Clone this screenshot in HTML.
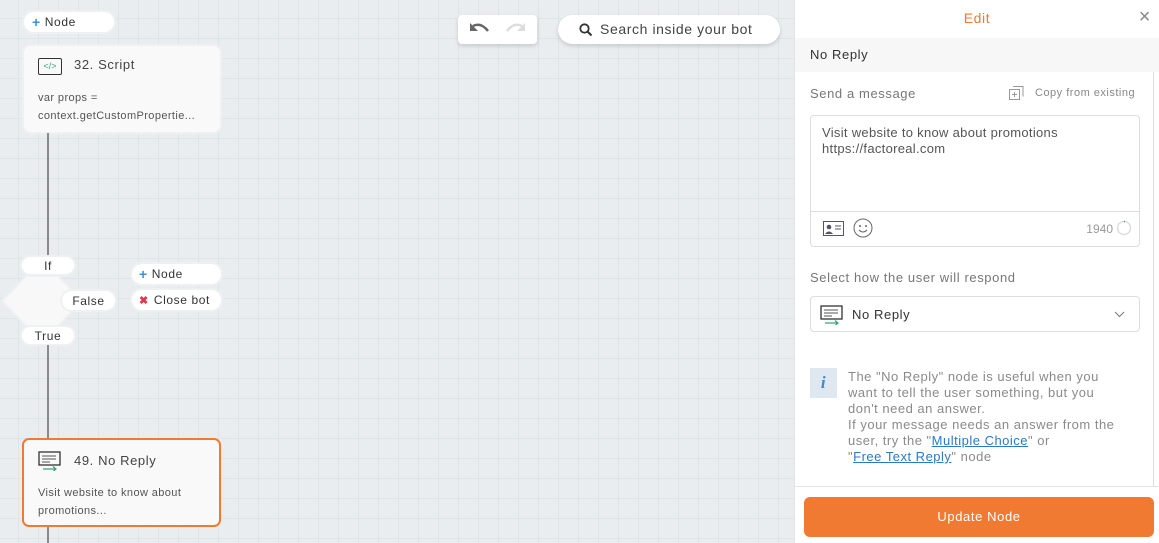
<!DOCTYPE html>
<html><head><style>
*{box-sizing:border-box;margin:0;padding:0}
body{width:1159px;height:543px;overflow:hidden;font-family:"Liberation Sans",sans-serif;position:relative;background:#e9edef;letter-spacing:0.6px}
.canvas{position:absolute;left:0;top:0;width:794px;height:543px;background-color:#e9edef;
background-image:linear-gradient(#dbe6e5 1px,transparent 1px),linear-gradient(90deg,#dbe6e5 1px,transparent 1px);
background-size:20px 20px;background-position:18px 18px}
.pill{position:absolute;background:#fff;border-radius:12px;font-size:12px;color:#333;box-shadow:0 0 0 2px #eef1f2;display:flex;align-items:center}
.card{position:absolute;background:#f9f9f9;border-radius:7px;box-shadow:0 0 0 2px #eef0f1}
.line{position:absolute;background:#8a8a8a;width:2px}
.plus{color:#3a93d8;font-weight:bold;font-size:14px;margin-right:4px}
.panel{position:absolute;left:794px;top:0;width:365px;height:543px;background:#fff;border-left:1px solid #e4e4e4}
a{color:#2a7ac6;text-decoration:underline}
</style></head><body>
<div class="canvas"></div>
<div class="pill" style="left:24px;top:12px;width:90px;height:20px;padding-left:8px"><span class="plus">+</span>Node</div>
<div class="card" style="left:24px;top:46px;width:196px;height:86px">
 <div style="position:absolute;left:14px;top:12px;width:24px;height:17px;border:1px solid #333;border-radius:2px;font-size:9px;color:#3aa37a;text-align:center;line-height:15px;letter-spacing:0">&lt;/&gt;</div>
 <div style="position:absolute;left:50px;top:11px;font-size:13px;color:#444">32. Script</div>
 <div style="position:absolute;left:14px;top:43px;font-size:11px;color:#555;line-height:18px;letter-spacing:0.4px">var props =<br>context.getCustomPropertie...</div>
</div>
<div class="line" style="left:47px;top:133px;height:124px"></div>
<svg style="position:absolute;left:2px;top:275px" width="80" height="52"><polygon points="0,26 24,1 56,1 80,26 56,51 24,51" fill="#f8f8f8" stroke="#eef0f1" stroke-width="2"/></svg>
<div class="pill" style="left:22px;top:257px;width:52px;height:17px;justify-content:center">If</div>
<div class="pill" style="left:62px;top:291px;width:53px;height:19px;justify-content:center">False</div>
<div class="pill" style="left:22px;top:327px;width:52px;height:17px;justify-content:center">True</div>
<div class="pill" style="left:132px;top:264px;width:89px;height:20px;padding-left:7px"><span class="plus">+</span>Node</div>
<div class="pill" style="left:132px;top:290px;width:89px;height:20px;padding-left:7px"><span style="color:#e0394f;font-weight:bold;margin-right:5px;font-size:11px">✖</span>Close bot</div>
<div class="line" style="left:47px;top:345px;height:93px"></div>
<div class="line" style="left:47px;top:527px;height:16px"></div>
<div class="card" style="left:22px;top:438px;width:199px;height:89px;border:2px solid #f07a32;box-shadow:none">
 <svg style="position:absolute;left:14px;top:11px" width="24" height="20" viewBox="0 0 24 20"><rect x="1" y="1" width="21" height="13" fill="none" stroke="#333" stroke-width="1.3"/><path d="M4 5h14M4 8h14M4 11h8" stroke="#555" stroke-width="1"/><path d="M5 18h13M15 15.5l3 2.5-3 2.5" stroke="#3aa37a" stroke-width="1.2" fill="none"/></svg>
 <div style="position:absolute;left:50px;top:13px;font-size:13px;color:#444">49. No Reply</div>
 <div style="position:absolute;left:14px;top:44px;font-size:11px;color:#555;line-height:18px;letter-spacing:0.4px">Visit website to know about<br>promotions...</div>
</div>
<div style="position:absolute;left:458px;top:15px;width:79px;height:29px;background:#fff;border-radius:4px;box-shadow:0 2px 4px rgba(0,0,0,.15)">
 <svg style="position:absolute;left:11px;top:7px" width="22" height="14" viewBox="0 0 22 14"><path d="M4 4 Q12 0 19 9" stroke="#666" stroke-width="2.5" fill="none"/><path d="M1 1v8h8z" fill="#666"/></svg>
 <svg style="position:absolute;left:46px;top:7px" width="22" height="14" viewBox="0 0 22 14"><path d="M18 4 Q10 0 3 9" stroke="#ddd" stroke-width="2.5" fill="none"/><path d="M21 1v8h-8z" fill="#ddd"/></svg>
</div>
<div style="position:absolute;left:558px;top:15px;width:222px;height:29px;background:#fff;border-radius:15px;box-shadow:0 2px 4px rgba(0,0,0,.15);font-size:14px;color:#444;line-height:29px;padding-left:42px">
 <svg style="position:absolute;left:21px;top:8px" width="14" height="14"><circle cx="5.5" cy="5.5" r="4.2" stroke="#333" stroke-width="1.8" fill="none"/><path d="M8.5 8.5l4 4" stroke="#333" stroke-width="2"/></svg>Search inside your bot</div>
<div class="panel">
 <div style="position:absolute;top:10px;width:100%;text-align:center;color:#f07a32;font-size:14px">Edit</div>
 <div style="position:absolute;right:8px;top:6px;font-size:20px;color:#888">×</div>
 <div style="position:absolute;top:38px;left:0;width:364px;height:34px;background:#f7f7f7;padding-left:15px;line-height:34px;font-size:13px;color:#333">No Reply</div>
 <div style="position:absolute;left:358px;top:72px;width:1px;height:415px;background:#ddd"></div>
 <div style="position:absolute;left:15px;top:86px;font-size:13px;color:#777">Send a message</div>
 <svg style="position:absolute;left:214px;top:85px" width="15" height="16"><rect x="0.5" y="4.5" width="10" height="10" fill="none" stroke="#999"/><path d="M4 1.5h10v10" stroke="#999" fill="none"/><path d="M5.5 7v5M3 9.5h5" stroke="#999"/></svg>
 <div style="position:absolute;left:240px;top:87px;font-size:11px;color:#888;letter-spacing:0.5px">Copy from existing</div>
 <div style="position:absolute;left:15px;top:115px;width:330px;height:132px;border:1px solid #ddd;border-radius:4px">
  <div style="padding:9px 11px;font-size:13px;color:#555;line-height:16px;letter-spacing:0.3px">Visit website to know about promotions<br>https://factoreal.com</div>
  <div style="position:absolute;left:0;right:0;top:95px;border-top:1px solid #ddd"></div>
  <svg style="position:absolute;left:12px;top:105px" width="21" height="16"><rect x="0.5" y="0.5" width="20" height="14" fill="none" stroke="#556"/><circle cx="6" cy="6" r="2.3" fill="#556"/><path d="M2 13q4-5 8 0z" fill="#556"/><path d="M12 5h6M12 8h6" stroke="#556"/></svg>
  <svg style="position:absolute;left:42px;top:102px" width="20" height="20"><circle cx="10" cy="10" r="9" stroke="#666" fill="none"/><circle cx="7" cy="8" r="1" fill="#666"/><circle cx="13" cy="8" r="1" fill="#666"/><path d="M6 12q4 4 8 0" stroke="#666" fill="none"/></svg>
  <div style="position:absolute;right:26px;top:106px;font-size:12px;color:#999;letter-spacing:0">1940</div>
  <svg style="position:absolute;right:7px;top:104px" width="16" height="16"><circle cx="8" cy="8" r="6.5" stroke="#ddd" stroke-width="1.5" fill="none"/><path d="M8 1.5a6.5 6.5 0 0 1 1 0" stroke="#3aa37a" stroke-width="1.5"/></svg>
 </div>
 <div style="position:absolute;left:15px;top:270px;font-size:13px;color:#777">Select how the user will respond</div>
 <div style="position:absolute;left:15px;top:296px;width:330px;height:36px;border:1px solid #ddd;border-radius:4px">
  <svg style="position:absolute;left:9px;top:8px" width="24" height="20" viewBox="0 0 24 20"><rect x="1" y="1" width="21" height="13" fill="none" stroke="#333" stroke-width="1.3"/><path d="M4 5h14M4 8h14M4 11h8" stroke="#555" stroke-width="1"/><path d="M5 18h13M15 15.5l3 2.5-3 2.5" stroke="#3aa37a" stroke-width="1.2" fill="none"/></svg>
  <div style="position:absolute;left:41px;top:10px;font-size:13px;color:#333">No Reply</div>
  <svg style="position:absolute;right:14px;top:14px" width="11" height="7"><path d="M1 1l4.5 4.5L10 1" stroke="#777" fill="none"/></svg>
 </div>
 <div style="position:absolute;left:15px;top:368px;width:27px;height:30px;background:#dfe8f0;color:#3a8ad0;font-style:italic;font-weight:bold;font-family:'Liberation Serif',serif;font-size:17px;text-align:center;line-height:30px">i</div>
 <div style="position:absolute;left:53px;top:369px;width:290px;font-size:13px;line-height:16px;color:#8a8a8a;letter-spacing:0.5px">The "No Reply" node is useful when you<br>want to tell the user something, but you<br>don't need an answer.<br>If your message needs an answer from the<br>user, try the "<a>Multiple Choice</a>" or<br>"<a>Free Text Reply</a>" node</div>
 <div style="position:absolute;left:0;top:486px;width:364px;border-top:1px solid #e4e4e4"></div>
 <div style="position:absolute;left:9px;top:497px;width:350px;height:40px;background:#f07a32;border-radius:6px;color:#fff;font-size:13px;text-align:center;line-height:40px">Update Node</div>
</div>
</body></html>
